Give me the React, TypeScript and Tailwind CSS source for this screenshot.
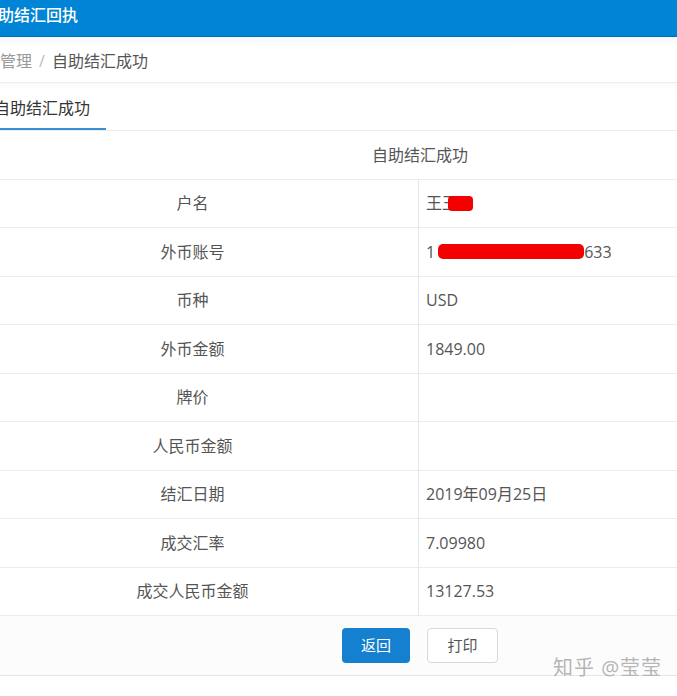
import React from 'react';

const cjk = { fontFamily: '"Open Sans", "Noto Sans CJK SC", sans-serif' };

interface Row {
  label: string;
  value: React.ReactNode;
}

const rows: Row[] = [
  {
    label: '户名',
    value: (
      <span className="flex items-center">
        王王
        <span className="-ml-[10px] inline-block h-[15px] w-[25px] rounded-[4px] bg-[#f40000]" />
      </span>
    ),
  },
  {
    label: '外币账号',
    value: (
      <span className="flex items-center">
        1
        <span className="ml-[3px] inline-block h-[15px] w-[146px] rounded-[5px] bg-[#f40000]" />
        633
      </span>
    ),
  },
  { label: '币种', value: 'USD' },
  { label: '外币金额', value: '1849.00' },
  { label: '牌价', value: '' },
  { label: '人民币金额', value: '' },
  { label: '结汇日期', value: '2019年09月25日' },
  { label: '成交汇率', value: '7.09980' },
  { label: '成交人民币金额', value: '13127.53' },
];

export default function App() {
  return (
    <div className="relative h-[696px] w-[677px] overflow-hidden bg-white text-[#444]" style={cjk}>
      {/* title bar */}
      <div className="flex h-[37px] items-center border-b border-[#0a6fb0] bg-[#0084d5] pb-[7px]">
        <span className="-ml-[18px] text-[16px] font-medium text-white">自助结汇回执</span>
      </div>

      {/* breadcrumb */}
      <div className="flex h-[46px] items-center border-b border-[#ececec] bg-gradient-to-b from-[#f2fafd] to-white to-[20%] pt-[3px] text-[16px]">
        <span className="-ml-[32px] text-[#999]">结汇管理</span>
        <span className="mx-[7px] text-[#bbb]">/</span>
        <span className="text-[#555]">自助结汇成功</span>
      </div>

      {/* tabs */}
      <div className="flex h-[48px] items-end border-b border-[#ececec] bg-gradient-to-b from-[#fafafa] to-white to-[15%]">
        <div className="-ml-[20px] flex h-full items-center border-b-2 border-[#3a8fd0] pl-[14px] pr-[16px] pt-[4px] text-[16px] text-[#333]">
          自助结汇成功
        </div>
      </div>

      {/* result table */}
      <div className="-ml-[33px] w-[906px] text-[16px]">
        <div className="flex h-[48.5px] items-center justify-center border-b border-[#ececec] text-[#555]">
          自助结汇成功
        </div>
        {rows.map((row) => (
          <div key={row.label} className="flex h-[48.5px] border-b border-[#ececec]">
            <div className="flex w-[452px] items-center justify-center border-r border-[#e6e6e6] text-[#555]">
              {row.label}
            </div>
            <div className="flex flex-1 items-center pl-[7px] text-[#555]">{row.value}</div>
          </div>
        ))}
        <div className="flex h-[60px] items-center justify-center gap-[17px] border-b border-[#e6e6e6] bg-[#fcfcfc]">
          <button className="h-[35px] w-[68px] rounded-[4px] bg-[#1580d0] text-[15px] text-white">返回</button>
          <button className="h-[35px] w-[71px] rounded-[4px] border border-[#d9d9d9] bg-white text-[15px] text-[#555]">
            打印
          </button>
        </div>
      </div>

      {/* watermark */}
      <div className="absolute left-[553px] top-[653px] text-[20px] tracking-[1px] text-[#b5b5b5] [text-shadow:0_0_2px_#fff]">
        知乎 @莹莹
      </div>
    </div>
  );
}
